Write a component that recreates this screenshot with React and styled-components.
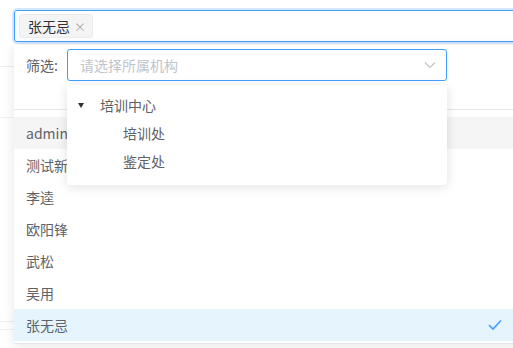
import React from 'react';
import styled, { createGlobalStyle } from 'styled-components';

const GlobalStyle = createGlobalStyle`
  html, body {
    margin: 0;
    padding: 0;
    background: #fff;
    overflow: hidden;
  }
  body {
    font-family: "Noto Sans CJK SC", "Noto Sans", sans-serif;
    font-size: 14px;
    color: #606266;
  }
`;

const Page = styled.div`
  display: flex;
  width: 513px;
  height: 348px;
  overflow: hidden;
  background: #fff;
`;

const Gutter = styled.div`
  flex: 0 0 14px;
  display: flex;
  flex-direction: column;
`;

const GutterRow = styled.div`
  height: ${p => p.$h}px;
  border-bottom: 1px solid ${p => (p.$faint ? '#f0f0f0' : '#ebeef5')};
  flex-shrink: 0;
`;

const Main = styled.div`
  flex: 1;
  padding-top: 10px;
`;

const SelectWrap = styled.div`
  position: relative;
  width: 560px;
`;

const SelectBox = styled.div`
  display: flex;
  align-items: center;
  height: 32px;
  box-sizing: border-box;
  padding: 0 4px;
  border: 1px solid #409eff;
  border-radius: 3px;
  box-shadow: 0 0 0 2px #d4e8fb;
`;

const Tag = styled.span`
  display: inline-flex;
  align-items: center;
  height: 24px;
  box-sizing: border-box;
  padding: 0 6px 0 8px;
  background: #f4f4f5;
  border: 1px solid #ececee;
  border-radius: 3px;
  color: #303133;
  font-size: 14px;
  gap: 4px;
`;

const TagClose = styled.span`
  color: #a8abb2;
  font-size: 12px;
  line-height: 1;
  margin-top: 2px;
`;

const Dropdown = styled.div`
  position: absolute;
  top: 35px;
  left: 0;
  right: 0;
  background: #fff;
  border-bottom: 1px solid #e4e7ed;
  box-shadow: 0 2px 12px 0 rgba(0, 0, 0, 0.1);
`;

const FilterRow = styled.div`
  display: flex;
  align-items: center;
  padding: 4px 12px 0;
  height: 32px;
`;

const FilterLabel = styled.span`
  color: #606266;
  width: 41px;
  flex-shrink: 0;
  white-space: nowrap;
`;

const TreeSelect = styled.div`
  position: relative;
  width: 380px;
`;

const TreeInput = styled.div`
  display: flex;
  align-items: center;
  justify-content: space-between;
  height: 32px;
  box-sizing: border-box;
  padding: 0 10px 0 12px;
  border: 1px solid #409eff;
  border-radius: 3px;
  color: #c0c4cc;
`;

const TreePopup = styled.div`
  position: absolute;
  top: 36px;
  left: 0;
  right: 0;
  padding: 6px 0 10px;
  background: #fff;
  border-radius: 3px;
  box-shadow: 0 2px 12px 0 rgba(0, 0, 0, 0.12);
  z-index: 2;
`;

const TreeNode = styled.div`
  display: flex;
  align-items: center;
  height: 28px;
  padding-left: ${p => p.$level * 23 + 11}px;
  color: #606266;
`;

const Caret = styled.span`
  width: 0;
  height: 0;
  margin-right: 16px;
  border-left: 3.5px solid transparent;
  border-right: 3.5px solid transparent;
  border-top: 5px solid #303133;
  visibility: ${p => (p.$leaf ? 'hidden' : 'visible')};
`;

const Divider = styled.div`
  margin-top: 28px;
  height: 1px;
  background: #e4e7ed;
`;

const List = styled.ul`
  list-style: none;
  margin: 0;
  padding: 7px 0 2px;
`;

const Option = styled.li`
  display: flex;
  align-items: center;
  justify-content: space-between;
  height: 32px;
  padding: 0 12px;
  background: ${p => (p.$selected ? '#e6f4fd' : p.$hover ? '#f5f5f5' : 'transparent')};
  color: #606266;
`;

const Check = styled.svg`
  margin-right: 60px;
`;

const users = ['admin', '测试新', '李逵', '欧阳锋', '武松', '吴用', '张无忌'];

export default function App() {
  return (
    <Page>
      <GlobalStyle />
      <Gutter>
        <GutterRow $h={66} />
        <GutterRow $h={50} $faint />
        <GutterRow $h={203} />
        <GutterRow $h={7} $faint />
      </Gutter>
      <Main>
        <SelectWrap>
          <SelectBox>
            <Tag>
              张无忌
              <TagClose>×</TagClose>
            </Tag>
          </SelectBox>
          <Dropdown>
            <FilterRow>
              <FilterLabel>筛选:</FilterLabel>
              <TreeSelect>
                <TreeInput>
                  请选择所属机构
                  <svg width="12" height="8" viewBox="0 0 12 8">
                    <path d="M1 1.5 L6 6.5 L11 1.5" fill="none" stroke="#c0c4cc" strokeWidth="1.2" />
                  </svg>
                </TreeInput>
                <TreePopup>
                  <TreeNode $level={0}>
                    <Caret />
                    培训中心
                  </TreeNode>
                  <TreeNode $level={1}>
                    <Caret $leaf />
                    培训处
                  </TreeNode>
                  <TreeNode $level={1}>
                    <Caret $leaf />
                    鉴定处
                  </TreeNode>
                </TreePopup>
              </TreeSelect>
            </FilterRow>
            <Divider />
            <List>
              {users.map((name, i) => (
                <Option key={name} $hover={i === 0} $selected={name === '张无忌'}>
                  {name}
                  {name === '张无忌' && (
                    <Check width="14" height="12" viewBox="0 0 14 12">
                      <path d="M1 6 L5 10 L13 1.5" fill="none" stroke="#409eff" strokeWidth="1.6" />
                    </Check>
                  )}
                </Option>
              ))}
            </List>
          </Dropdown>
        </SelectWrap>
      </Main>
    </Page>
  );
}
